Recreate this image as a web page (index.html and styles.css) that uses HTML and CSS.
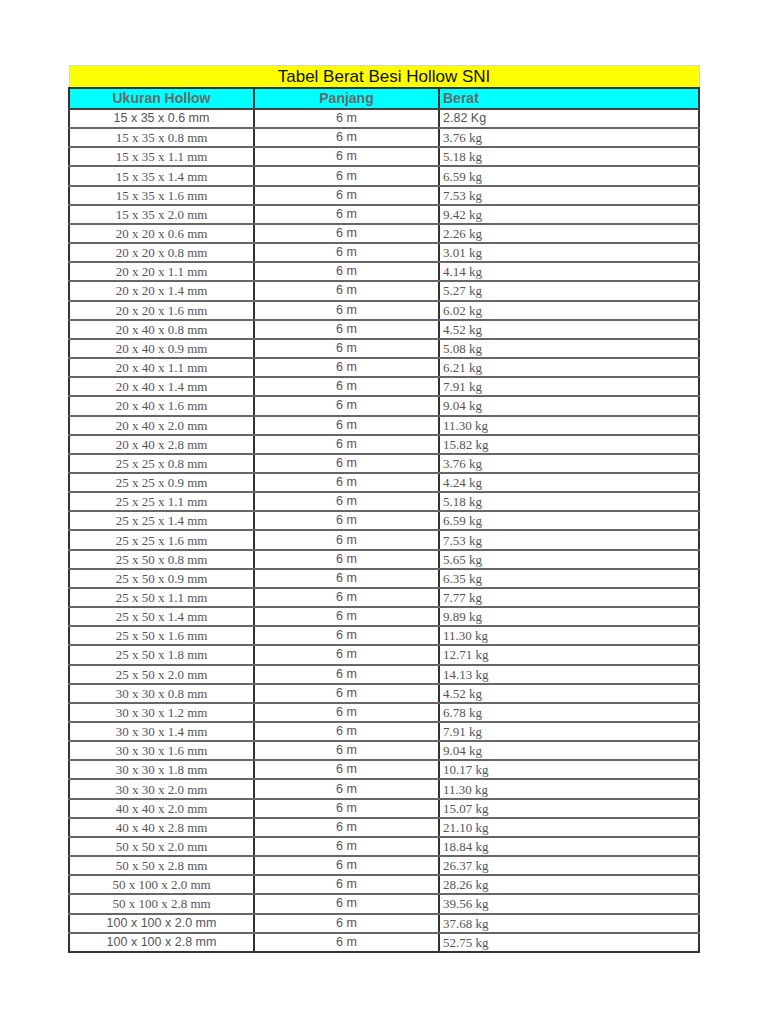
FILE: index.html
```html
<!DOCTYPE html>
<html>
<head>
<meta charset="utf-8">
<link rel="stylesheet" href="styles.css">
</head>
<body>
<div class="page">
<table class="tbl">
<colgroup><col class="c1"><col class="c2"><col class="c3"></colgroup>
<thead>
<tr class="title"><th colspan="3">Tabel Berat Besi Hollow SNI</th></tr>
<tr class="head"><th class="mid">Ukuran Hollow</th><th class="mid">Panjang</th><th class="lft">Berat</th></tr>
</thead>
<tbody>
<tr><td class="mid sans">15 x 35 x 0.6 mm</td><td class="mid sans">6 m</td><td class="lft sans">2.82 Kg</td></tr>
<tr><td class="mid serif">15 x 35 x 0.8 mm</td><td class="mid sans">6 m</td><td class="lft serif">3.76 kg</td></tr>
<tr><td class="mid serif">15 x 35 x 1.1 mm</td><td class="mid sans">6 m</td><td class="lft serif">5.18 kg</td></tr>
<tr><td class="mid serif">15 x 35 x 1.4 mm</td><td class="mid sans">6 m</td><td class="lft serif">6.59 kg</td></tr>
<tr><td class="mid serif">15 x 35 x 1.6 mm</td><td class="mid sans">6 m</td><td class="lft serif">7.53 kg</td></tr>
<tr><td class="mid serif">15 x 35 x 2.0 mm</td><td class="mid sans">6 m</td><td class="lft serif">9.42 kg</td></tr>
<tr><td class="mid serif">20 x 20 x 0.6 mm</td><td class="mid sans">6 m</td><td class="lft serif">2.26 kg</td></tr>
<tr><td class="mid serif">20 x 20 x 0.8 mm</td><td class="mid sans">6 m</td><td class="lft serif">3.01 kg</td></tr>
<tr><td class="mid serif">20 x 20 x 1.1 mm</td><td class="mid sans">6 m</td><td class="lft serif">4.14 kg</td></tr>
<tr><td class="mid serif">20 x 20 x 1.4 mm</td><td class="mid sans">6 m</td><td class="lft serif">5.27 kg</td></tr>
<tr><td class="mid serif">20 x 20 x 1.6 mm</td><td class="mid sans">6 m</td><td class="lft serif">6.02 kg</td></tr>
<tr><td class="mid serif">20 x 40 x 0.8 mm</td><td class="mid sans">6 m</td><td class="lft serif">4.52 kg</td></tr>
<tr><td class="mid serif">20 x 40 x 0.9 mm</td><td class="mid sans">6 m</td><td class="lft serif">5.08 kg</td></tr>
<tr><td class="mid serif">20 x 40 x 1.1 mm</td><td class="mid sans">6 m</td><td class="lft serif">6.21 kg</td></tr>
<tr><td class="mid serif">20 x 40 x 1.4 mm</td><td class="mid sans">6 m</td><td class="lft serif">7.91 kg</td></tr>
<tr><td class="mid serif">20 x 40 x 1.6 mm</td><td class="mid sans">6 m</td><td class="lft serif">9.04 kg</td></tr>
<tr><td class="mid serif">20 x 40 x 2.0 mm</td><td class="mid sans">6 m</td><td class="lft serif">11.30 kg</td></tr>
<tr><td class="mid serif">20 x 40 x 2.8 mm</td><td class="mid sans">6 m</td><td class="lft serif">15.82 kg</td></tr>
<tr><td class="mid serif">25 x 25 x 0.8 mm</td><td class="mid sans">6 m</td><td class="lft serif">3.76 kg</td></tr>
<tr><td class="mid serif">25 x 25 x 0.9 mm</td><td class="mid sans">6 m</td><td class="lft serif">4.24 kg</td></tr>
<tr><td class="mid serif">25 x 25 x 1.1 mm</td><td class="mid sans">6 m</td><td class="lft serif">5.18 kg</td></tr>
<tr><td class="mid serif">25 x 25 x 1.4 mm</td><td class="mid sans">6 m</td><td class="lft serif">6.59 kg</td></tr>
<tr><td class="mid serif">25 x 25 x 1.6 mm</td><td class="mid sans">6 m</td><td class="lft serif">7.53 kg</td></tr>
<tr><td class="mid serif">25 x 50 x 0.8 mm</td><td class="mid sans">6 m</td><td class="lft serif">5.65 kg</td></tr>
<tr><td class="mid serif">25 x 50 x 0.9 mm</td><td class="mid sans">6 m</td><td class="lft serif">6.35 kg</td></tr>
<tr><td class="mid serif">25 x 50 x 1.1 mm</td><td class="mid sans">6 m</td><td class="lft serif">7.77 kg</td></tr>
<tr><td class="mid serif">25 x 50 x 1.4 mm</td><td class="mid sans">6 m</td><td class="lft serif">9.89 kg</td></tr>
<tr><td class="mid serif">25 x 50 x 1.6 mm</td><td class="mid sans">6 m</td><td class="lft serif">11.30 kg</td></tr>
<tr><td class="mid serif">25 x 50 x 1.8 mm</td><td class="mid sans">6 m</td><td class="lft serif">12.71 kg</td></tr>
<tr><td class="mid serif">25 x 50 x 2.0 mm</td><td class="mid sans">6 m</td><td class="lft serif">14.13 kg</td></tr>
<tr><td class="mid serif">30 x 30 x 0.8 mm</td><td class="mid sans">6 m</td><td class="lft serif">4.52 kg</td></tr>
<tr><td class="mid serif">30 x 30 x 1.2 mm</td><td class="mid sans">6 m</td><td class="lft serif">6.78 kg</td></tr>
<tr><td class="mid serif">30 x 30 x 1.4 mm</td><td class="mid sans">6 m</td><td class="lft serif">7.91 kg</td></tr>
<tr><td class="mid serif">30 x 30 x 1.6 mm</td><td class="mid sans">6 m</td><td class="lft serif">9.04 kg</td></tr>
<tr><td class="mid serif">30 x 30 x 1.8 mm</td><td class="mid sans">6 m</td><td class="lft serif">10.17 kg</td></tr>
<tr><td class="mid serif">30 x 30 x 2.0 mm</td><td class="mid sans">6 m</td><td class="lft serif">11.30 kg</td></tr>
<tr><td class="mid serif">40 x 40 x 2.0 mm</td><td class="mid sans">6 m</td><td class="lft serif">15.07 kg</td></tr>
<tr><td class="mid serif">40 x 40 x 2.8 mm</td><td class="mid sans">6 m</td><td class="lft serif">21.10 kg</td></tr>
<tr><td class="mid serif">50 x 50 x 2.0 mm</td><td class="mid sans">6 m</td><td class="lft serif">18.84 kg</td></tr>
<tr><td class="mid serif">50 x 50 x 2.8 mm</td><td class="mid sans">6 m</td><td class="lft serif">26.37 kg</td></tr>
<tr><td class="mid serif">50 x 100 x 2.0 mm</td><td class="mid sans">6 m</td><td class="lft serif">28.26 kg</td></tr>
<tr><td class="mid serif">50 x 100 x 2.8 mm</td><td class="mid sans">6 m</td><td class="lft serif">39.56 kg</td></tr>
<tr><td class="mid sans">100 x 100 x 2.0 mm</td><td class="mid sans">6 m</td><td class="lft serif">37.68 kg</td></tr>
<tr><td class="mid sans">100 x 100 x 2.8 mm</td><td class="mid sans">6 m</td><td class="lft serif">52.75 kg</td></tr>
</tbody>
</table>
</div>
</body>
</html>
```

FILE: styles.css
```css
html, body {
  margin: 0;
  padding: 0;
  background: #ffffff;
}

.page {
  padding: 65px 0 0 68px;
}

.tbl {
  border-collapse: collapse;
  table-layout: fixed;
  width: 630px;
  font-family: "Liberation Sans", Arial, sans-serif;
}

.c1 { width: 185px; }
.c2 { width: 185px; }
.c3 { width: 260px; }

.title th {
  height: 21px;
  padding: 0;
  background: #ffff00;
  border: 1px solid #d6d6c0;
  border-bottom: 2px solid #333333;
  font-weight: normal;
  font-size: 17px;
  color: #111111;
  text-align: center;
  line-height: 20px;
}

.head th {
  height: 19px;
  padding: 0 3px;
  background: #00ffff;
  border-left: 2px solid #333333;
  border-right: 2px solid #333333;
  border-bottom: 2px solid #444444;
  font-weight: bold;
  font-size: 14px;
  color: #6a6a6a;
  line-height: 17px;
}

tbody td {
  height: 17.16px;
  padding: 0 3px;
  border-left: 2px solid #333333;
  border-right: 2px solid #333333;
  border-bottom: 2px solid #666666;
  color: #555555;
  line-height: 15px;
  white-space: nowrap;
}

tbody tr:last-child td {
  border-bottom: 2px solid #333333;
}

.mid { text-align: center; }
.lft { text-align: left; }

.sans {
  font-family: "Liberation Sans", Arial, sans-serif;
  font-size: 12.5px;
}

.serif {
  font-family: "Liberation Serif", "Times New Roman", serif;
  font-size: 13px;
}
```
